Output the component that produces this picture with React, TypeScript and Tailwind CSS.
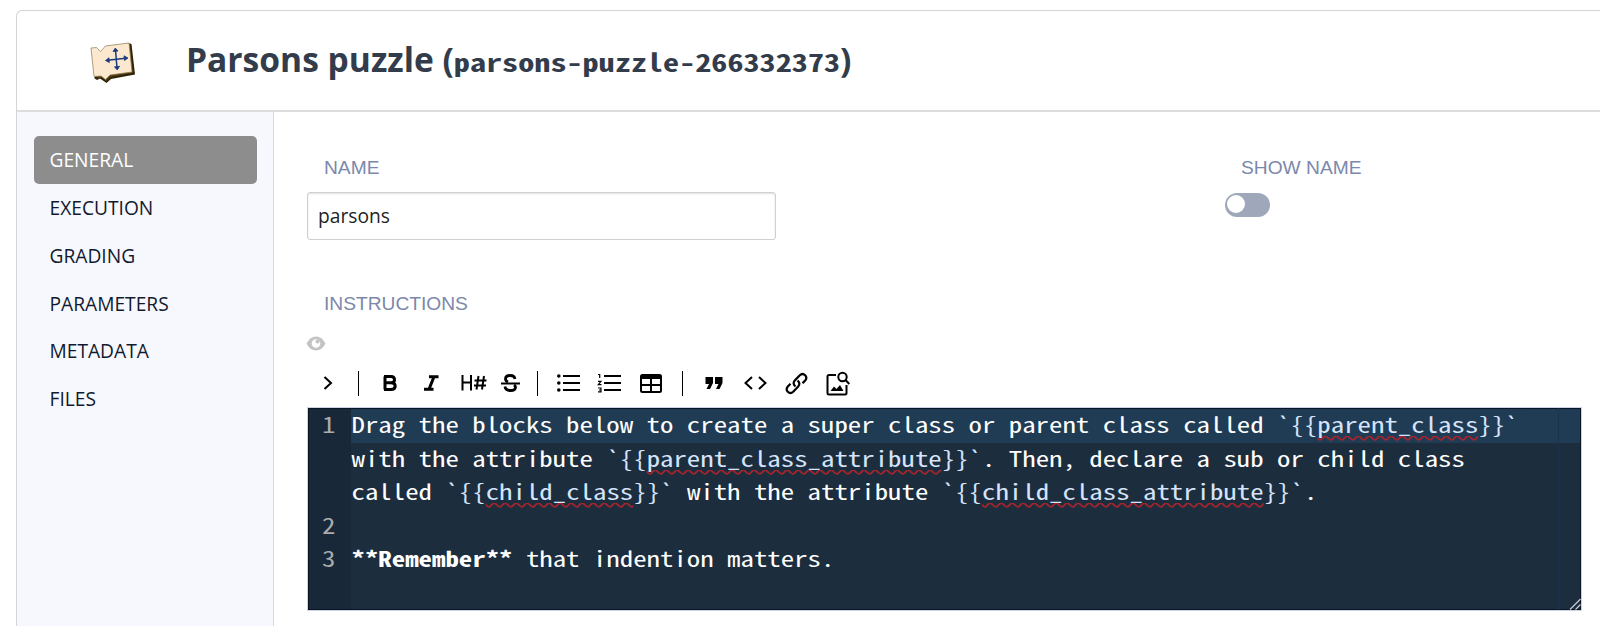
import type { ReactNode } from 'react'

const navItems = ['GENERAL', 'EXECUTION', 'GRADING', 'PARAMETERS', 'METADATA', 'FILES']

function PuzzleLogo() {
  return (
    <svg width="46" height="42" viewBox="0 0 46 42">
      <path d="M4 36 L7 38 L10 36.500 L16.500 41 L21 37 L45 32.500 L41.500 2 L38 1 Z" fill="#2e2208" />
      <path d="M5 34 L9 37 L12 35 L16 39.500 L21 35 L43 31 L40 2 Z" fill="#4d3b12" />
      <path d="M1 6 L6.500 5.500 L10.500 9.500 L15.500 4 L39 1 L42 30 L20 33 L15.500 37.500 L11 34 L4 34.500 Z" fill="#fbe8cf" stroke="#8d7a4f" strokeWidth="0.700" />
      <g stroke="#1b3a7c" strokeWidth="1.500" fill="#1b3a7c">
        <path d="M25.500 8 L27 26 M17.500 18.200 L35.500 16.200" />
        <path d="M25.300 6 L23 9.500 L28 9 Z M27.200 28 L24.500 24.800 L29.600 24.300 Z M15.500 18.500 L19 15.800 L19.300 20.500 Z M38 16 L34 13.800 L34.500 18.600 Z" strokeWidth="0.800" />
      </g>
    </svg>
  )
}

function Divider() {
  return <div className="w-px h-[25px] bg-black" />
}

function Icon({ w, h, children }: { w: number; h: number; children: ReactNode }) {
  return (
    <svg width={w} height={h} viewBox={`0 0 ${w} ${h}`} fill="none" stroke="#000" strokeWidth="2" className="shrink-0">
      {children}
    </svg>
  )
}

function Toolbar() {
  return (
    <div className="flex items-center h-[26px] mt-[19px] pl-[16px]">
      <Icon w={10} h={14}>
        <path d="M1.500 1 L8 7 L1.500 13" />
      </Icon>
      <div className="ml-[25px]"><Divider /></div>
      <Icon w={38} h={16}>
        <path d="M26 1.500 V14.500 M25 1.500 H32 Q35.500 1.500 35.500 4.700 Q35.500 7.700 32 7.700 H26 M32 7.700 Q36.200 7.700 36.200 11 Q36.200 14.500 32 14.500 H25" strokeWidth="3" />
      </Icon>
      <Icon w={42} h={16}>
        <path d="M32 1.800 H41.500 M27 14.200 H36.500 M37 1.800 L32 14.200" strokeWidth="3" />
      </Icon>
      <Icon w={48} h={18}>
        <path d="M23.500 1 V16.500 M32 1 V16.500 M23.500 8.500 H32 M39.500 2 L37.500 15.500 M45 2 L43 15.500 M35.500 6.500 H47.500 M35 11.500 H47" />
      </Icon>
      <Icon w={33} h={18}>
        <path d="M28 5 Q27.500 1.500 23.300 1.500 Q18.500 1.500 18.500 5 Q18.500 7 21 8 M27 11 Q28.500 12 28.500 13.200 Q28.500 16.500 23.500 16.500 Q18.500 16.500 18 12.500" strokeWidth="2.800" />
        <path d="M14 9.500 H33" />
      </Icon>
      <div className="ml-[17px]"><Divider /></div>
      <Icon w={42} h={20}>
        <path d="M25 3 H42 M25 10 H42 M25 17 H42" />
        <g fill="#000" stroke="none"><circle cx="20.800" cy="3" r="1.800" /><circle cx="20.800" cy="10" r="1.800" /><circle cx="20.800" cy="17" r="1.800" /></g>
      </Icon>
      <Icon w={41} h={20}>
        <path d="M24 3 H41 M24 10 H41 M24 17 H41" />
        <path d="M18 1.500 H19.700 V5 M18 8.300 H21 L18.300 11.700 H21.500 M18 15 H21 V18.800 H18 M19 17 H21" strokeWidth="1.200" />
      </Icon>
      <Icon w={41} h={20}>
        <rect x="20" y="2" width="20" height="17" rx="1.500" />
        <path d="M20 3.500 H40 M30 4 V19 M20 12 H40" />
        <path d="M20 4 H40" strokeWidth="4" />
      </Icon>
      <div className="ml-5"><Divider /></div>
      <Icon w={40} h={14}>
        <path d="M22.500 1 H30 V7 L27 13 H23.500 L26 8 H22.500 Z M32 1 H39.500 V7 L36.500 13 H33 L35.500 8 H32 Z" fill="#000" stroke="none" />
      </Icon>
      <Icon w={44} h={14}>
        <path d="M29 1 L22.500 7 L29 13 M36 1 L42.500 7 L36 13" />
      </Icon>
      <div className="ml-[18px]">
        <svg width="23" height="23" viewBox="0 0 23 23" fill="none" stroke="#000" strokeWidth="2.200">
          <path d="M10.500 14.500 Q7 11.500 10 8.300 L14.800 3.200 Q17.500 0.800 20.200 3.200 Q22.500 5.800 20.200 8.500 L17.500 11.300" />
          <path d="M12.500 8.500 Q16 11.500 13 14.700 L8.200 19.800 Q5.500 22.200 2.800 19.800 Q0.500 17.200 2.800 14.500 L5.500 11.700" />
        </svg>
      </div>
      <div className="ml-[18px]">
        <svg width="24" height="25" viewBox="0 0 24 25" fill="none" stroke="#000" strokeWidth="2">
          <path d="M10 4 H3 Q1.500 4 1.500 5.500 V22 Q1.500 23.500 3 23.500 H19 Q20.500 23.500 20.500 22 V14" />
          <path d="M4.500 20 L8 15.500 L10.500 18 L14 14 L17.500 20 Z" fill="#000" stroke="none" />
          <circle cx="16.500" cy="6" r="4.200" />
          <path d="M19.500 9 L23.300 13" />
        </svg>
      </div>
    </div>
  )
}

function Param({ name }: { name: string }) {
  return (
    <span className="text-[#d5e3fb]">
      {'`{{'}
      <span className="underline decoration-wavy decoration-[#a3242c] decoration-[1.500px] underline-offset-[3px] [text-decoration-skip-ink:none]">{name}</span>
      {'}}`'}
    </span>
  )
}

function Row({ n, active, children }: { n?: number; active?: boolean; children?: ReactNode }) {
  return (
    <div className={active ? 'h-[33.500px] bg-linear-to-r from-transparent from-[42px] to-[#203c55] to-[42px]' : 'h-[33.500px]'}>
      <div className="flex whitespace-pre origin-[0_28.500px] scale-y-80 -translate-y-[4px]">
        <div className="w-[42.500px] shrink-0 pr-[16px] text-right text-[#a9abad]">{n}</div>
        <div className="flex-1">{children}</div>
      </div>
    </div>
  )
}

function Editor() {
  return (
    <div className="relative mt-[11px] w-[1275px] h-[204px] border border-[#cdd2e4] bg-[#1c2d3e] overflow-hidden font-['Noto_Sans_Mono_CJK_SC','DejaVu_Sans_Mono',monospace] text-[26.840px] leading-[33.500px] text-white">
      <div className="h-full border border-[#081527] bg-linear-to-r from-[#182838] from-[42px] to-[#1c2d3e] to-[42px]">
        <Row n={1} active>Drag the blocks below to create a super class or parent class called <Param name="parent_class" /></Row>
        <Row>with the attribute <Param name="parent_class_attribute" />. Then, declare a sub or child class</Row>
        <Row>called <Param name="child_class" /> with the attribute <Param name="child_class_attribute" />.</Row>
        <Row n={2} />
        <Row n={3}><b>**Remember**</b> that indention matters.</Row>
      </div>
      <div className="absolute top-0 right-[22px] w-px h-full bg-[#1b344c]" />
      <svg className="absolute right-0 bottom-0" width="12" height="12" viewBox="0 0 12 12" stroke="#c9cdd2" strokeWidth="1.200">
        <path d="M1 11.500 L11.500 1 M6.500 11.500 L11.500 6.500" />
      </svg>
    </div>
  )
}

function Label({ children }: { children: ReactNode }) {
  return (
    <div className="pl-[17px] font-['Liberation_Sans',sans-serif] text-[19.200px] leading-6 text-[#7b88ab]">{children}</div>
  )
}

export default function App() {
  return (
    <div className="w-full h-[626px] overflow-hidden bg-white pt-[10px] pl-4 font-['Open_Sans',sans-serif]">
      <div className="flex flex-col h-[640px] border-l border-t border-[#d4d5d7] rounded-tl-md overflow-hidden">
        <header className="flex items-center h-[101px] shrink-0 border-b-2 border-[#dcdddf] pl-[73px]">
          <div className="pt-[5px]"><PuzzleLogo /></div>
          <h1 className="ml-[50px] pb-[2px] text-[33.600px] leading-none font-bold text-[#333c4a] whitespace-nowrap">
            Parsons puzzle (
            <code className="inline-block origin-[0_30px] scale-y-78 font-['Noto_Sans_Mono_CJK_SC','DejaVu_Sans_Mono',monospace] text-[32.200px] leading-none">parsons-puzzle-266332373</code>)
          </h1>
        </header>
        <div className="flex flex-1">
          <nav className="w-[257px] shrink-0 bg-[#f7f8fd] border-r border-[#d8dadd] pt-6 pl-[16.500px] pr-4">
            {navItems.map((item, i) => (
              <div
                key={item}
                className={
                  i === 0
                    ? 'h-[47.850px] pl-4 rounded-[5px] bg-[#8d8d8d] text-white text-[19.200px] leading-[47.850px]'
                    : 'h-[47.850px] pl-4 text-[#111a2e] text-[19.200px] leading-[47.850px]'
                }
              >
                {item}
              </div>
            ))}
          </nav>
          <main className="flex-1 pl-[33px] pt-[44px]">
            <div className="flex">
              <div className="w-[917px]">
                <Label>NAME</Label>
                <input
                  defaultValue="parsons"
                  className="block mt-[12px] w-[469px] h-12 px-[10px] pb-[2px] rounded-[3px] border border-[#cfd0d2] shadow-[inset_0_1px_2px_rgba(0,0,0,0.120)] text-[19.200px] text-[#222] outline-none"
                />
              </div>
              <div>
                <Label>SHOW NAME</Label>
                <div className="ml-px mt-[13px] w-[45px] h-6 rounded-full bg-[#9fa8bb] pt-[2px] pl-[2px]">
                  <div className="size-[18px] rounded-full bg-white" />
                </div>
              </div>
            </div>
            <div className="mt-[52px]">
              <Label>INSTRUCTIONS</Label>
            </div>
            <svg className="mt-[20px] -ml-px" width="20" height="15" viewBox="0 0 20 15">
              <path d="M0.500 7.500 Q4 0.500 10 0.500 Q16 0.500 19.500 7.500 Q16 14.500 10 14.500 Q4 14.500 0.500 7.500 Z" fill="#c3c4c6" />
              <circle cx="10" cy="7.500" r="4.300" fill="#fff" />
              <circle cx="11.500" cy="5.500" r="2" fill="#c3c4c6" />
            </svg>
            <Toolbar />
            <Editor />
          </main>
        </div>
      </div>
    </div>
  )
}
